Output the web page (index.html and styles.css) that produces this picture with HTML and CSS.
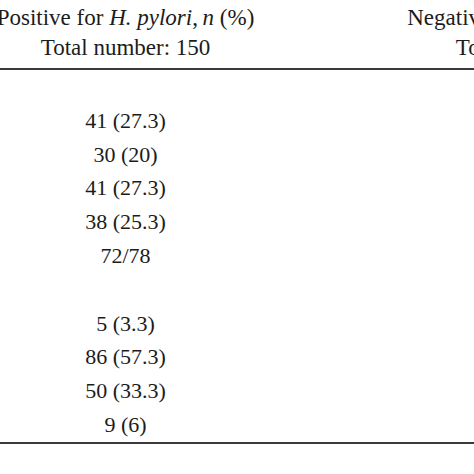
FILE: index.html
```html
<!DOCTYPE html>
<html>
<head>
<meta charset="utf-8">
<link rel="stylesheet" href="styles.css">
</head>
<body>
<div class="table">
  <div class="head">
    <div class="cell">
      <div class="line">Positive for <i>H. pylori</i>,&#8201;<i>n</i> (%)</div>
      <div class="line">Total number: 150</div>
    </div>
    <div class="cell">
      <div class="line">Negative for <i>H. pylori</i>,&#8201;<i>n</i> (%)</div>
      <div class="line">Total number: 150</div>
    </div>
  </div>
  <div class="body">
    <div class="row"><div class="cell"></div><div class="cell"></div></div>
    <div class="row"><div class="cell">41 (27.3)</div><div class="cell"></div></div>
    <div class="row"><div class="cell">30 (20)</div><div class="cell"></div></div>
    <div class="row"><div class="cell">41 (27.3)</div><div class="cell"></div></div>
    <div class="row"><div class="cell">38 (25.3)</div><div class="cell"></div></div>
    <div class="row"><div class="cell">72/78</div><div class="cell"></div></div>
    <div class="row"><div class="cell"></div><div class="cell"></div></div>
    <div class="row"><div class="cell">5 (3.3)</div><div class="cell"></div></div>
    <div class="row"><div class="cell">86 (57.3)</div><div class="cell"></div></div>
    <div class="row"><div class="cell">50 (33.3)</div><div class="cell"></div></div>
    <div class="row"><div class="cell">9 (6)</div><div class="cell"></div></div>
  </div>
</div>
</body>
</html>
```
FILE: styles.css
```css
html, body {
  margin: 0;
  padding: 0;
  background: #ffffff;
  overflow: hidden;
}
body {
  width: 474px;
  height: 474px;
  font-family: "Liberation Serif", "Times New Roman", serif;
  font-size: 22px;
  color: #1c1c1c;
}
.table {
  width: 474px;
}
.head {
  display: grid;
  grid-template-columns: 415px 415px;
  margin-left: -82px;
  padding: 3px 0 5px;
  border-bottom: 2px solid #3a3a3a;
  font-size: 23px;
}
.head .cell {
  text-align: center;
  white-space: nowrap;
}
.line {
  line-height: 30px;
}
.body {
  border-bottom: 2px solid #3a3a3a;
}
.row {
  display: grid;
  grid-template-columns: 415px 415px;
  margin-left: -82px;
  height: 33.8px;
  line-height: 33.8px;
}
.row .cell {
  text-align: center;
  white-space: nowrap;
}
```
